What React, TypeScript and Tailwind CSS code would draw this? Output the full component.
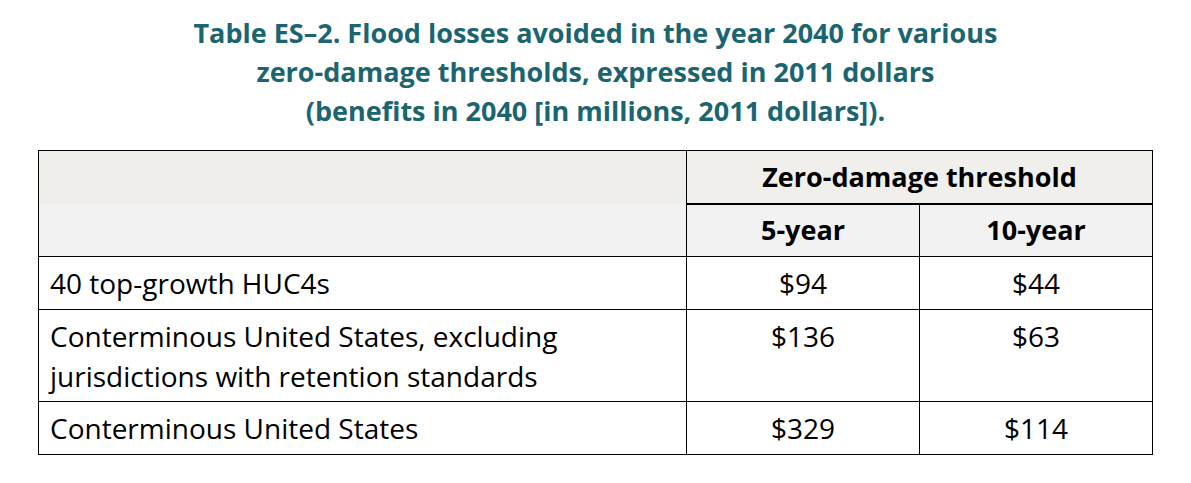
const ROWS = [
  { label: ["40 top-growth HUC4s"], five: "$94", ten: "$44", h: "h-[53px]" },
  {
    label: ["Conterminous United States, excluding", "jurisdictions with retention standards"],
    five: "$136",
    ten: "$63",
    h: "h-[92px]",
  },
  { label: ["Conterminous United States"], five: "$329", ten: "$114", h: "h-[53px]" },
];

export default function App() {
  return (
    <div className="h-[483px] w-[1191px] bg-white font-['Open_Sans','Lato',sans-serif] text-black">
      <h1 className="pt-[13px] text-center text-[27px] font-bold leading-[39px] text-[#1b6570]">
        Table ES–2. Flood losses avoided in the year 2040 for various
        <br />
        zero-damage thresholds, expressed in 2011 dollars
        <br />
        (benefits in 2040 [in millions, 2011 dollars]).
      </h1>

      <table className="ml-[38px] mt-[20px] w-[1115px] border-collapse border border-black text-[28px]">
        <colgroup>
          <col className="w-[648px]" />
          <col className="w-[233px]" />
          <col className="w-[233px]" />
        </colgroup>
        <thead className="text-[27px]">
          <tr className="h-[53px]">
            <th rowSpan={2} className="border border-black p-0">
              <div className="h-[53px] bg-[#efeeea]" />
              <div className="h-[52px] bg-[#f2f2f2]" />
            </th>
            <th
              colSpan={2}
              className="border border-b-2 border-black bg-[#f0efeb] text-center font-bold"
            >
              Zero-damage threshold
            </th>
          </tr>
          <tr className="h-[53px]">
            <th className="border border-black bg-[#f2f2f2] text-center font-bold">5-year</th>
            <th className="border border-black bg-[#f2f2f2] text-center font-bold">10-year</th>
          </tr>
        </thead>
        <tbody>
          {ROWS.map((r) => (
            <tr key={r.five} className={r.h}>
              <td className="border border-black px-[11px] align-top leading-[40px] pt-[6px]">
                {r.label.map((l) => (
                  <div key={l}>{l}</div>
                ))}
              </td>
              <td className="border border-black pt-[6px] text-center align-top leading-[40px]">
                {r.five}
              </td>
              <td className="border border-black pt-[6px] text-center align-top leading-[40px]">
                {r.ten}
              </td>
            </tr>
          ))}
        </tbody>
      </table>
    </div>
  );
}
